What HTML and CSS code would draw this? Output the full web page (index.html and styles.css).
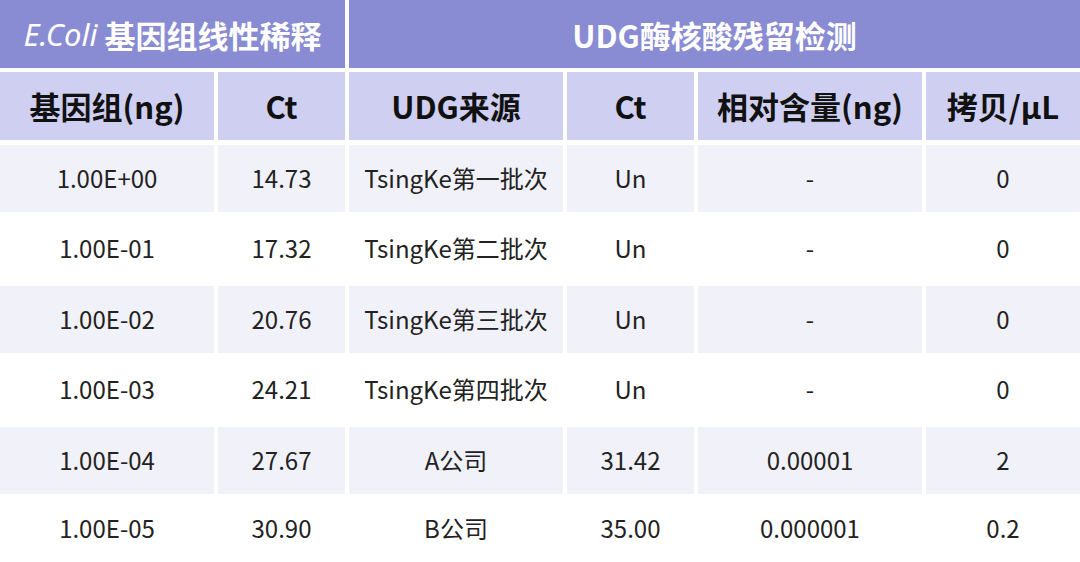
FILE: index.html
```html
<!DOCTYPE html>
<html lang="zh">
<head>
<meta charset="utf-8">
<link rel="stylesheet" href="styles.css">
</head>
<body>
<div class="table">
  <div class="head">
    <div class="title span2"><i>E.Coli</i>&nbsp;基因组线性稀释</div>
    <div class="title span4">UDG酶核酸残留检测</div>
    <div class="th">基因组(ng)</div>
    <div class="th">Ct</div>
    <div class="th">UDG来源</div>
    <div class="th">Ct</div>
    <div class="th">相对含量(ng)</div>
    <div class="th">拷贝/μL</div>
  </div>
  <div class="body">
    <div class="td odd">1.00E+00</div><div class="td odd">14.73</div><div class="td odd">TsingKe第一批次</div><div class="td odd">Un</div><div class="td odd">-</div><div class="td odd">0</div>
    <div class="td">1.00E-01</div><div class="td">17.32</div><div class="td">TsingKe第二批次</div><div class="td">Un</div><div class="td">-</div><div class="td">0</div>
    <div class="td odd">1.00E-02</div><div class="td odd">20.76</div><div class="td odd">TsingKe第三批次</div><div class="td odd">Un</div><div class="td odd">-</div><div class="td odd">0</div>
    <div class="td">1.00E-03</div><div class="td">24.21</div><div class="td">TsingKe第四批次</div><div class="td">Un</div><div class="td">-</div><div class="td">0</div>
    <div class="td odd">1.00E-04</div><div class="td odd">27.67</div><div class="td odd">A公司</div><div class="td odd">31.42</div><div class="td odd">0.00001</div><div class="td odd">2</div>
    <div class="td">1.00E-05</div><div class="td">30.90</div><div class="td">B公司</div><div class="td">35.00</div><div class="td">0.000001</div><div class="td">0.2</div>
  </div>
</div>
</body>
</html>
```
FILE: styles.css
```css
html, body {
  margin: 0;
  padding: 0;
  background: #ffffff;
}
body {
  width: 1080px;
  height: 562px;
  overflow: hidden;
  font-family: "Noto Sans CJK SC", "Noto Sans", sans-serif;
}
.table {
  display: flex;
  flex-direction: column;
  gap: 5px;
  width: 1080px;
}
.head, .body {
  display: grid;
  grid-template-columns: 214px 127px 214px 127px 224px 154px;
  column-gap: 4px;
  row-gap: 3.5px;
}
.head {
  grid-template-rows: 68px 68px;
}
.body {
  grid-template-rows: repeat(5, 67px) 63px;
}
.title, .th, .td {
  display: flex;
  align-items: center;
  justify-content: center;
  white-space: nowrap;
}
.title {
  background: #898bd3;
  color: #ffffff;
  font-size: 31px;
  font-weight: 700;
}
.title i {
  font-family: "Noto Sans", sans-serif;
  font-style: italic;
  font-weight: 400;
}
.span2 { grid-column: span 2; }
.span4 { grid-column: span 4; }
.th {
  background: #cfcff1;
  color: #111111;
  font-size: 31px;
  font-weight: 700;
}
.td {
  color: #222222;
  font-size: 24px;
  font-weight: 400;
  background: #ffffff;
  padding-bottom: 2px;
}
.td.odd {
  background: #f1f1f9;
}
```
